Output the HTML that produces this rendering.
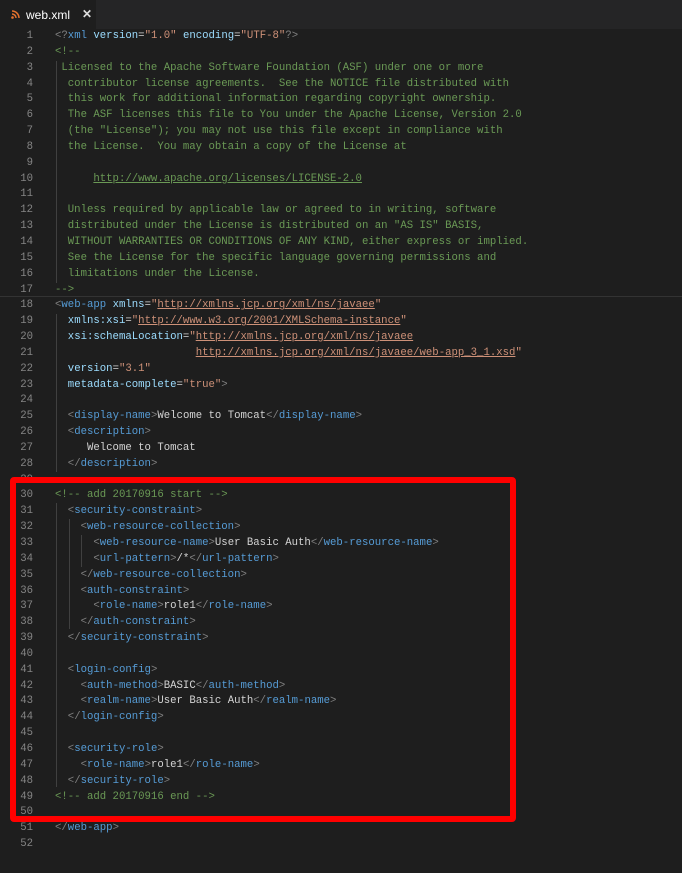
<!DOCTYPE html>
<html><head><meta charset="utf-8"><style>
body{margin:0;width:682px;height:873px;background:#1e1e1e;overflow:hidden;position:relative;font-family:"Liberation Mono",monospace}
.tabbar{position:absolute;left:0;top:0;width:682px;height:29px;background:#252526}
.tab{position:absolute;left:0;top:0;width:96px;height:29px;background:#1e1e1e;font-family:"Liberation Sans",sans-serif;font-size:12px;color:#fff}
.tab .t{position:absolute;left:26px;top:8px}
.tab .x{position:absolute;left:82px;top:7px;font-size:12px;font-weight:bold;color:#ddd}
.nums{position:absolute;left:0;top:29px;width:33px;text-align:right;font-size:10.67px;line-height:15.84px;color:#858585;white-space:pre}
pre{position:absolute;left:55px;top:29px;margin:0;font-family:"Liberation Mono",monospace;font-size:10.67px;line-height:15.84px;color:#d4d4d4}
.c{color:#6a9955}.b{color:#808080}.n{color:#569cd6}.a{color:#9cdcfe}.s{color:#ce9178}.u{color:#ce9178;text-decoration:underline}.cu{color:#6a9955;text-decoration:underline}
.hl{position:absolute;left:0;top:296px;width:682px;height:0;border-top:1px solid #333}
.box{position:absolute;left:10px;top:477px;width:494px;height:333px;border:6px solid #f00;border-radius:4px}
.g{position:absolute;width:1px;background:#404040}
</style></head><body>
<div class="tabbar"><div class="tab"><svg style="position:absolute;left:11px;top:10px" width="9" height="9" viewBox="0 0 9 9"><circle cx="1.5" cy="7.5" r="1.3" fill="#e8732e"/><path d="M1 4a4 4 0 0 1 4 4M1 1a7 7 0 0 1 7 7" stroke="#e8732e" stroke-width="1.5" fill="none"/></svg><span class="t">web.xml</span><span class="x">✕</span></div></div>
<div class="hl"></div>
<div class="g" style="left:56px;top:61px;height:222px"></div>
<div class="g" style="left:56px;top:314px;height:158px"></div>
<div class="g" style="left:56px;top:503px;height:284px"></div>
<div class="g" style="left:69px;top:519px;height:110px"></div>
<div class="g" style="left:81px;top:535px;height:32px"></div>
<div class="nums">1
2
3
4
5
6
7
8
9
10
11
12
13
14
15
16
17
18
19
20
21
22
23
24
25
26
27
28
29
30
31
32
33
34
35
36
37
38
39
40
41
42
43
44
45
46
47
48
49
50
51
52</div>
<pre><span class="b">&lt;?</span><span class="n">xml</span> <span class="a">version</span>=<span class="s">"1.0"</span> <span class="a">encoding</span>=<span class="s">"UTF-8"</span><span class="b">?&gt;</span>
<span class="c">&lt;!--
 Licensed to the Apache Software Foundation (ASF) under one or more
  contributor license agreements.  See the NOTICE file distributed with
  this work for additional information regarding copyright ownership.
  The ASF licenses this file to You under the Apache License, Version 2.0
  (the "License"); you may not use this file except in compliance with
  the License.  You may obtain a copy of the License at

      <span class="cu">http://www.apache.org/licenses/LICENSE-2.0</span>

  Unless required by applicable law or agreed to in writing, software
  distributed under the License is distributed on an "AS IS" BASIS,
  WITHOUT WARRANTIES OR CONDITIONS OF ANY KIND, either express or implied.
  See the License for the specific language governing permissions and
  limitations under the License.
--&gt;</span>
<span class="b">&lt;</span><span class="n">web-app</span> <span class="a">xmlns</span>=<span class="s">"</span><span class="u">http://xmlns.jcp.org/xml/ns/javaee</span><span class="s">"</span>
  <span class="a">xmlns:xsi</span>=<span class="s">"</span><span class="u">http://www.w3.org/2001/XMLSchema-instance</span><span class="s">"</span>
  <span class="a">xsi:schemaLocation</span>=<span class="s">"</span><span class="u">http://xmlns.jcp.org/xml/ns/javaee</span>
                      <span class="u">http://xmlns.jcp.org/xml/ns/javaee/web-app_3_1.xsd</span><span class="s">"</span>
  <span class="a">version</span>=<span class="s">"3.1"</span>
  <span class="a">metadata-complete</span>=<span class="s">"true"</span><span class="b">&gt;</span>

  <span class="b">&lt;</span><span class="n">display-name</span><span class="b">&gt;</span>Welcome to Tomcat<span class="b">&lt;/</span><span class="n">display-name</span><span class="b">&gt;</span>
  <span class="b">&lt;</span><span class="n">description</span><span class="b">&gt;</span>
     Welcome to Tomcat
  <span class="b">&lt;/</span><span class="n">description</span><span class="b">&gt;</span>

<span class="c">&lt;!-- add 20170916 start --&gt;</span>
  <span class="b">&lt;</span><span class="n">security-constraint</span><span class="b">&gt;</span>
    <span class="b">&lt;</span><span class="n">web-resource-collection</span><span class="b">&gt;</span>
      <span class="b">&lt;</span><span class="n">web-resource-name</span><span class="b">&gt;</span>User Basic Auth<span class="b">&lt;/</span><span class="n">web-resource-name</span><span class="b">&gt;</span>
      <span class="b">&lt;</span><span class="n">url-pattern</span><span class="b">&gt;</span>/*<span class="b">&lt;/</span><span class="n">url-pattern</span><span class="b">&gt;</span>
    <span class="b">&lt;/</span><span class="n">web-resource-collection</span><span class="b">&gt;</span>
    <span class="b">&lt;</span><span class="n">auth-constraint</span><span class="b">&gt;</span>
      <span class="b">&lt;</span><span class="n">role-name</span><span class="b">&gt;</span>role1<span class="b">&lt;/</span><span class="n">role-name</span><span class="b">&gt;</span>
    <span class="b">&lt;/</span><span class="n">auth-constraint</span><span class="b">&gt;</span>
  <span class="b">&lt;/</span><span class="n">security-constraint</span><span class="b">&gt;</span>

  <span class="b">&lt;</span><span class="n">login-config</span><span class="b">&gt;</span>
    <span class="b">&lt;</span><span class="n">auth-method</span><span class="b">&gt;</span>BASIC<span class="b">&lt;/</span><span class="n">auth-method</span><span class="b">&gt;</span>
    <span class="b">&lt;</span><span class="n">realm-name</span><span class="b">&gt;</span>User Basic Auth<span class="b">&lt;/</span><span class="n">realm-name</span><span class="b">&gt;</span>
  <span class="b">&lt;/</span><span class="n">login-config</span><span class="b">&gt;</span>

  <span class="b">&lt;</span><span class="n">security-role</span><span class="b">&gt;</span>
    <span class="b">&lt;</span><span class="n">role-name</span><span class="b">&gt;</span>role1<span class="b">&lt;/</span><span class="n">role-name</span><span class="b">&gt;</span>
  <span class="b">&lt;/</span><span class="n">security-role</span><span class="b">&gt;</span>
<span class="c">&lt;!-- add 20170916 end --&gt;</span>

<span class="b">&lt;/</span><span class="n">web-app</span><span class="b">&gt;</span>
</pre>
<div class="box"></div>
</body></html>
